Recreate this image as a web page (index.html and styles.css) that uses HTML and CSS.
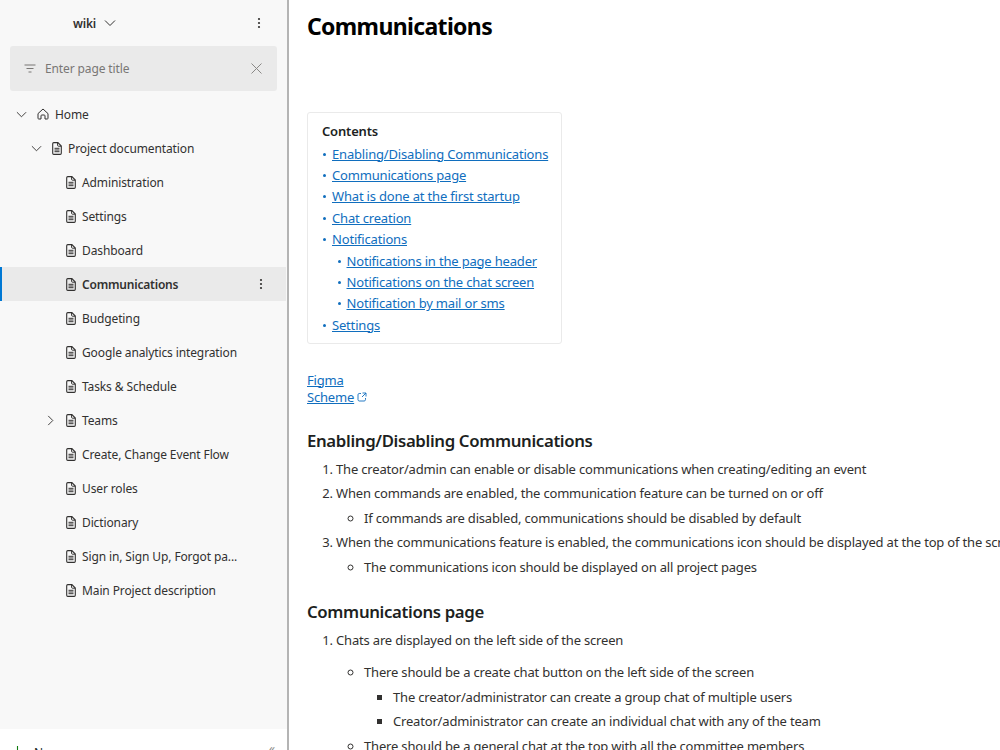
FILE: index.html
```html
<!DOCTYPE html>
<html lang="en">
<head>
    <meta charset="UTF-8">
    <title>Communications - Wiki</title>
    <link rel="stylesheet" href="styles.css">
</head>
<body>
    <svg class="sprite" width="0" height="0">
        <symbol id="doc" viewBox="0 0 10 13">
            <path d="M.7 1.700C.7 1.100 1.200.6 1.800.6h4.100l3.400 3.400v7.300c0 .6-.5 1.100-1.100 1.100H1.800c-.6 0-1.100-.5-1.100-1.100z" fill="none" stroke="currentColor" stroke-width="1.100"/>
            <path d="M5.600.8v2.700c0 .4.3.7.7.7H9" fill="none" stroke="currentColor" stroke-width="1"/>
            <path d="M2.500 6.300h5M2.500 8h5M2.500 9.700h5" stroke="currentColor" stroke-width="1"/>
        </symbol>
        <symbol id="chev-down" viewBox="0 0 12 12">
            <path d="M1 3.500l5 5 5-5" fill="none" stroke="currentColor" stroke-width="1"/>
        </symbol>
        <symbol id="chev-right" viewBox="0 0 12 12">
            <path d="M3.500 1l5 5-5 5" fill="none" stroke="currentColor" stroke-width="1"/>
        </symbol>
        <symbol id="dots" viewBox="0 0 4 12">
            <circle cx="2" cy="2" r="1.100" fill="currentColor"/>
            <circle cx="2" cy="6" r="1.100" fill="currentColor"/>
            <circle cx="2" cy="10" r="1.100" fill="currentColor"/>
        </symbol>
    </svg>

    <aside class="sidebar">
        <div class="wiki-head">
            <span class="wiki-name">wiki</span>
            <svg class="wiki-chev"><use href="#chev-down"/></svg>
            <svg class="dots head-dots"><use href="#dots"/></svg>
        </div>
        <div class="filter">
            <svg class="filter-icon" viewBox="0 0 12 10"><path d="M.5 1h11M2.500 4.500h7M4.500 8h3" fill="none" stroke="currentColor" stroke-width="1"/></svg>
            <span class="filter-text">Enter page title</span>
            <svg class="filter-x" viewBox="0 0 11 11"><path d="M.5.5l10 10M10.500.5l-10 10" fill="none" stroke="currentColor" stroke-width="1"/></svg>
        </div>
        <ul class="tree">
            <li class="row lvl0">
                <svg class="twist"><use href="#chev-down"/></svg>
                <svg class="home" viewBox="0 0 12 12"><path d="M1 5.600 6 1l5 4.600v4.700c0 .4-.3.700-.7.700H8V7.800c0-.5-.4-.8-.8-.8H4.800c-.5 0-.8.300-.8.800V11H1.700c-.4 0-.7-.3-.7-.7z" fill="none" stroke="currentColor" stroke-width="1"/></svg>
                <span class="label">Home</span>
            </li>
            <li class="row lvl1">
                <svg class="twist"><use href="#chev-down"/></svg>
                <svg class="doc"><use href="#doc"/></svg>
                <span class="label">Project documentation</span>
            </li>
            <li class="row lvl2"><svg class="doc"><use href="#doc"/></svg><span class="label">Administration</span></li>
            <li class="row lvl2"><svg class="doc"><use href="#doc"/></svg><span class="label">Settings</span></li>
            <li class="row lvl2"><svg class="doc"><use href="#doc"/></svg><span class="label">Dashboard</span></li>
            <li class="row lvl2 selected">
                <svg class="doc"><use href="#doc"/></svg>
                <span class="label">Communications</span>
                <svg class="dots row-dots"><use href="#dots"/></svg>
            </li>
            <li class="row lvl2"><svg class="doc"><use href="#doc"/></svg><span class="label">Budgeting</span></li>
            <li class="row lvl2"><svg class="doc"><use href="#doc"/></svg><span class="label">Google analytics integration</span></li>
            <li class="row lvl2"><svg class="doc"><use href="#doc"/></svg><span class="label">Tasks &amp; Schedule</span></li>
            <li class="row lvl2 has-twist">
                <svg class="twist"><use href="#chev-right"/></svg>
                <svg class="doc"><use href="#doc"/></svg>
                <span class="label">Teams</span>
            </li>
            <li class="row lvl2"><svg class="doc"><use href="#doc"/></svg><span class="label">Create, Change Event Flow</span></li>
            <li class="row lvl2"><svg class="doc"><use href="#doc"/></svg><span class="label">User roles</span></li>
            <li class="row lvl2"><svg class="doc"><use href="#doc"/></svg><span class="label">Dictionary</span></li>
            <li class="row lvl2"><svg class="doc"><use href="#doc"/></svg><span class="label">Sign in, Sign Up, Forgot pa...</span></li>
            <li class="row lvl2"><svg class="doc"><use href="#doc"/></svg><span class="label">Main Project description</span></li>
        </ul>
        <div class="new-bar">
            <svg class="plus" viewBox="0 0 12 12"><path d="M6 0v12M0 6h12" fill="none" stroke="#107c10" stroke-width="1.200"/></svg>
            <span class="new-text">New page</span>
            <span class="collapse">«</span>
        </div>
    </aside>

    <main class="content">
        <h1>Communications</h1>

        <nav class="toc">
            <div class="toc-title">Contents</div>
            <ul class="toc-list">
                <li><a href="#">Enabling/Disabling Communications</a></li>
                <li><a href="#">Communications page</a></li>
                <li><a href="#">What is done at the first startup</a></li>
                <li><a href="#">Chat creation</a></li>
                <li><a href="#">Notifications</a>
                    <ul class="toc-sub">
                        <li><a href="#">Notifications in the page header</a></li>
                        <li><a href="#">Notifications on the chat screen</a></li>
                        <li><a href="#">Notification by mail or sms</a></li>
                    </ul>
                </li>
                <li><a href="#">Settings</a></li>
            </ul>
        </nav>

        <p class="refs">
            <a href="#">Figma</a><br>
            <a href="#">Scheme</a>
            <svg class="ext" viewBox="0 0 10 10"><path d="M4 1.500H2.200c-.7 0-1.200.5-1.200 1.200v5c0 .7.500 1.300 1.200 1.300h5c.7 0 1.300-.6 1.300-1.300V6M5.500 1h3.500v3.500M9 1 5 5" fill="none" stroke="currentColor" stroke-width=".9"/></svg>
        </p>

        <h2>Enabling/Disabling Communications</h2>
        <ol class="doc-list">
            <li>The creator/admin can enable or disable communications when creating/editing an event</li>
            <li>When commands are enabled, the communication feature can be turned on or off
                <ul>
                    <li>If commands are disabled, communications should be disabled by default</li>
                </ul>
            </li>
            <li>When the communications feature is enabled, the communications icon should be displayed at the top of the screen
                <ul>
                    <li>The communications icon should be displayed on all project pages</li>
                </ul>
            </li>
        </ol>

        <h2>Communications page</h2>
        <ol class="doc-list">
            <li><p class="first">Chats are displayed on the left side of the screen</p>
                <ul>
                    <li>There should be a create chat button on the left side of the screen
                        <ul>
                            <li>The creator/administrator can create a group chat of multiple users</li>
                            <li>Creator/administrator can create an individual chat with any of the team</li>
                        </ul>
                    </li>
                    <li>There should be a general chat at the top with all the committee members</li>
                </ul>
            </li>
        </ol>
    </main>
</body>
</html>
```

FILE: styles.css
```css
* {
    box-sizing: border-box;
}
html, body {
    height: 750px;
    margin: 0;
    overflow: hidden;
}
body {
    display: flex;
    font-family: "Noto Sans", "Open Sans", sans-serif;
    font-size: 14px;
    color: #323130;
    background: #fff;
}
.sprite {
    display: none;
}

/* left tree */
.sidebar {
    flex: 0 0 289px;
    height: 750px;
    display: flex;
    flex-direction: column;
    background: #f8f8f8;
    border-right: 2px solid #b4b4b4;
    overflow: hidden;
}
.wiki-head {
    height: 46px;
    display: flex;
    align-items: center;
    padding: 0 26px 0 73px;
    flex: none;
}
.wiki-name {
    font-size: 12px;
    font-weight: 600;
    letter-spacing: -.2px;
}
.wiki-chev {
    width: 12px;
    height: 12px;
    margin-left: 8px;
}
.dots {
    width: 4px;
    height: 12px;
}
.head-dots {
    margin-left: auto;
}
.filter {
    height: 45px;
    margin: 0 10px;
    padding: 0 15px 0 14px;
    display: flex;
    align-items: center;
    flex: none;
    background: #eaeaea;
    border-radius: 3px;
    color: #797775;
}
.filter-icon {
    width: 12px;
    height: 10px;
    margin-right: 9px;
}
.filter-text {
    font-size: 12px;
    letter-spacing: -.12px;
}
.filter-x {
    width: 11px;
    height: 11px;
    margin-left: auto;
    color: #8a8886;
}
.tree {
    list-style: none;
    margin: 6px 0 0;
    padding: 0;
    flex: 1;
}
.row {
    height: 34px;
    width: 286px;
    display: flex;
    align-items: center;
    font-size: 12px;
    letter-spacing: -.12px;
}
.lvl0 { padding-left: 16px; }
.lvl1 { padding-left: 31px; }
.lvl2 { padding-left: 66px; }
.lvl2.has-twist { padding-left: 45px; }
.twist {
    width: 11px;
    height: 11px;
    margin-right: 10px;
    flex: none;
}
.home {
    width: 12px;
    height: 12px;
    margin-right: 6px;
    flex: none;
}
.doc {
    width: 10px;
    height: 13px;
    margin-right: 6px;
    flex: none;
}
.selected {
    background: #eaeaea;
    border-left: 2px solid #0078d4;
    padding-left: 64px;
}
.selected .label {
    font-weight: 600;
    letter-spacing: -.2px;
}
.row-dots {
    margin-left: auto;
    margin-right: 23px;
}
.new-bar {
    height: 21px;
    flex: none;
    background: #fff;
    display: flex;
    padding: 0 12px;
    align-items: flex-start;
}
.plus {
    width: 11px;
    height: 11px;
    margin-top: 17px;
    margin-right: 11px;
    flex: none;
}
.new-text, .collapse {
    line-height: 20px;
    font-size: 12px;
    white-space: nowrap;
}
.new-text {
    padding-top: 14px;
    color: #201f1e;
}
.collapse {
    padding-top: 10px;
    margin-left: auto;
    color: #8a8886;
}

/* page */
.content {
    flex: 1;
    min-width: 0;
    padding: 0 0 0 18px;
    white-space: nowrap;
    overflow: hidden;
    font-size: 13px;
    letter-spacing: -.18px;
}
h1 {
    font-size: 23px;
    font-weight: 700;
    color: #000;
    margin: 8px 0 0;
    line-height: 36px;
    letter-spacing: -.65px;
}
.toc {
    width: 255px;
    margin-top: 68px;
    padding: 7px 14px 6.500px;
    border: 1px solid #eaeaea;
    border-radius: 3px;
}
.toc-title {
    font-weight: 600;
    line-height: 23.500px;
    color: #201f1e;
}
.toc-list, .toc-sub {
    list-style: none;
    margin: 0;
    padding: 0;
}
.toc-sub {
    padding-left: 4.500px;
}
.toc li {
    line-height: 21.400px;
    padding-left: 10px;
    position: relative;
}
.toc li::before {
    content: "";
    position: absolute;
    left: 1px;
    top: 9px;
    width: 3px;
    height: 3px;
    border-radius: 50%;
    background: #106ebe;
}
a {
    color: #106ebe;
}
.refs {
    margin: 28px 0 0;
    line-height: 17.500px;
    color: #605e5c;
}
.ext {
    width: 10px;
    height: 10px;
    margin-left: 0;
    color: #106ebe;
}
h2 {
    font-size: 16.800px;
    font-weight: 600;
    color: #201f1e;
    letter-spacing: -.35px;
    margin: 0;
    line-height: 26px;
}
.refs + h2 {
    margin-top: 21px;
}
.doc-list + h2 {
    margin-top: 20px;
}
.doc-list {
    margin: 3px 0 0;
    padding-left: 29px;
    line-height: 24.500px;
}
.doc-list ul {
    margin: 0;
    padding-left: 28px;
    list-style: circle;
}
.doc-list ul ul {
    padding-left: 29px;
    list-style: square;
}
.first {
    margin: 0 0 7.500px;
}
```
